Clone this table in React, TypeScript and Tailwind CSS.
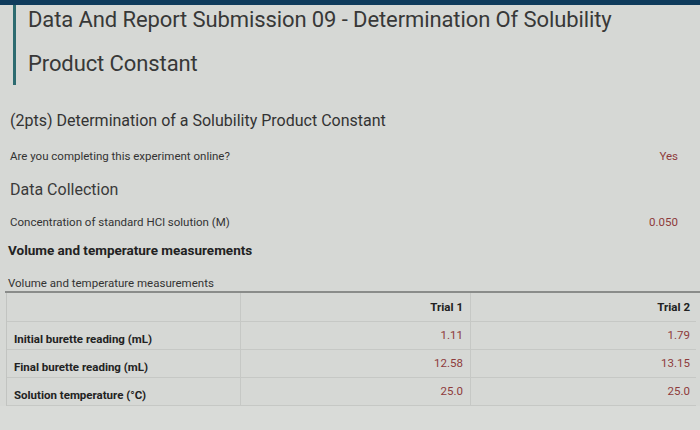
import React from "react";

const rows = [
  { label: "Initial burette reading (mL)", t1: "1.11", t2: "1.79" },
  { label: "Final burette reading (mL)", t1: "12.58", t2: "13.15" },
  { label: "Solution temperature (°C)", t1: "25.0", t2: "25.0" },
];

export default function App() {
  return (
    <div className="w-[700px] h-[430px] overflow-hidden bg-[#d6d8d5] text-[#333] font-['Roboto',sans-serif]">
      <div className="h-[5px] bg-[#0f3b5c]" />
      <div className="flex -mt-[7px]">
        <div className="ml-[13px] mt-[7px] w-[3px] h-[80px] bg-[#2d6b70]" />
        <div className="pl-[12px] text-[22px] leading-[44px] text-[#383838] tracking-[-0.1px]">
          <div>Data And Report Submission 09 - Determination Of Solubility</div>
          <div>Product Constant</div>
        </div>
      </div>

      <div className="pl-[10px] pr-[22px]">
        <div className="mt-[23px] text-[16px] leading-[24px] text-[#333]">
          (2pts) Determination of a Solubility Product Constant
        </div>
        <div className="mt-[15px] flex justify-between text-[11.5px] leading-[16px] text-[#333]">
          <span>Are you completing this experiment online?</span>
          <span className="text-[#8e3b3b]">Yes</span>
        </div>
        <div className="mt-[14px] text-[16px] leading-[24px] text-[#3a3a3a]">Data Collection</div>
        <div className="mt-[12px] flex justify-between text-[11.5px] leading-[16px] text-[#333]">
          <span>Concentration of standard HCl solution (M)</span>
          <span className="text-[#8e3b3b]">0.050</span>
        </div>
        <div className="mt-[10px] -ml-[2px] text-[13.5px] leading-[20px] font-bold text-[#222]">
          Volume and temperature measurements
        </div>
      </div>

      <div className="mt-[16px] pl-[8px] text-[11.5px] leading-[15px] text-[#333]">
        Volume and temperature measurements
      </div>
      <div className="ml-[5px] border-t-2 border-[#8a8c8a]">
        <div className="ml-[1px] border-l border-[#c2c4c1] mr-[4px]">
          <div className="grid grid-cols-[234px_230px_1fr] h-[29px] border-b border-[#c6c8c5] text-[11.5px] font-bold text-[#222]">
            <div className="border-r border-[#c6c8c5]" />
            <div className="border-r border-[#c6c8c5] flex items-center justify-end pr-[7px] pt-[2px]">Trial 1</div>
            <div className="flex items-center justify-end pr-[6px] pt-[2px]">Trial 2</div>
          </div>
          {rows.map((r) => (
            <div
              key={r.label}
              className="grid grid-cols-[234px_230px_1fr] h-[28px] border-b border-[#c6c8c5] text-[11.5px]"
            >
              <div className="border-r border-[#c6c8c5] flex items-center pl-[7px] pt-[8px] font-bold text-[#222]">
                {r.label}
              </div>
              <div className="border-r border-[#c6c8c5] flex items-center justify-end pr-[7px] text-[#8e3b3b]">
                {r.t1}
              </div>
              <div className="flex items-center justify-end pr-[6px] text-[#8e3b3b]">{r.t2}</div>
            </div>
          ))}
        </div>
      </div>
      <div className="h-[24px] bg-[#d9dbd8]" />
    </div>
  );
}
